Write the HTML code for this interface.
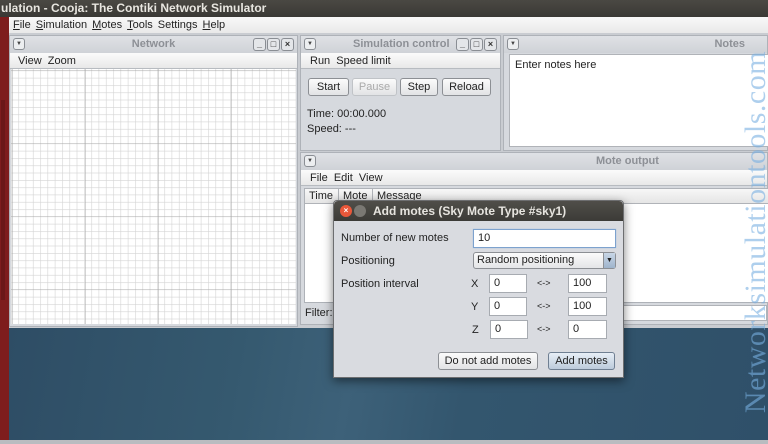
<!DOCTYPE html>
<html><head><meta charset="utf-8"><style>
*{margin:0;padding:0;box-sizing:border-box}
body{width:768px;height:444px;overflow:hidden;position:relative;font-family:"Liberation Sans","DejaVu Sans",sans-serif;font-size:11px;color:#222;background:#345a75}
.abs{position:absolute}
.title{left:0;top:0;width:768px;height:17px;background:linear-gradient(#4a4843,#3a3935);color:#e8e6e0;font-weight:bold;font-size:12px;line-height:17px;padding-left:1px;font-family:"Liberation Sans",sans-serif}
.menu{left:9px;top:17px;width:759px;height:16px;background:linear-gradient(#f8f8f8,#e9e9e9);line-height:16px;padding-left:4px}
.menu span{margin-right:5px}
.work{left:9px;top:33px;width:759px;height:295px;background:#c9ccd1}
.frame{background:#d6d9de;border:1px solid #aeb2b8}
.ftitle{height:17px;background:linear-gradient(#dfe1e5,#cfd2d7);color:#8d9096;font-weight:bold;text-align:center;line-height:17px;font-size:11px;position:relative}
.dd{position:absolute;left:3px;top:2px;width:12px;height:12px;border:1px solid #8a8e94;border-radius:3px;background:#eceef0;font-size:6px;line-height:10px;text-align:center;color:#444;text-indent:0}
.wb{position:absolute;top:2px;width:13px;height:13px;border:1px solid #8a8e94;border-radius:3px;background:#e4e6e9;font-size:9px;line-height:11px;text-align:center;color:#333;text-indent:0}
.mbar{height:16px;background:linear-gradient(#fbfbfb,#e8e8e8);line-height:16px;padding-left:6px;border-bottom:1px solid #b7bbc0}
.btn{position:absolute;height:18px;border:1px solid #8c8f94;border-radius:3px;background:linear-gradient(#fbfbfb,#e2e3e5);text-align:center;line-height:16px;font-size:11px}
.field{position:absolute;height:19px;background:#fff;border:1px solid #a7abb1;line-height:17px;padding-left:4px}
.dlgl{position:absolute;font-size:11px}
</style></head><body>
<div class="abs" style="left:0;top:17px;width:9px;height:423px;background:#7e1d1d"></div>
<div class="abs" style="left:1px;top:100px;width:4px;height:200px;background:#6b1818"></div>
<div class="abs title">ulation - Cooja: The Contiki Network Simulator</div>
<div class="abs menu"><span><u>F</u>ile</span><span><u>S</u>imulation</span><span><u>M</u>otes</span><span><u>T</u>ools</span><span>Settings</span><span><u>H</u>elp</span></div>
<div class="abs work"></div>
<div class="abs" style="left:9px;top:328px;width:759px;height:112px;background:linear-gradient(100deg,#2e4d65 0%,#35596f 30%,#3d6179 45%,#33566e 60%,#2f5069 100%)"></div>
<div class="abs" style="left:0;top:440px;width:768px;height:4px;background:#b9bcc0"></div>

<div class="abs frame" style="left:9px;top:35px;width:289px;height:292px">
 <div class="ftitle">Network<div class="dd">▼</div><div class="wb" style="left:243px">_</div><div class="wb" style="left:257px">□</div><div class="wb" style="left:271px">×</div></div>
 <div class="mbar" style="padding-left:8px">View&nbsp; Zoom</div>
 <svg style="position:absolute;left:1px;top:33px" width="285" height="255">
  <defs>
   <pattern id="mn" x="0" y="1.5" width="7.3" height="7.3" patternUnits="userSpaceOnUse"><path d="M0 0H7.3M0 0V7.3" stroke="#d4d4d4" stroke-width="1.2" fill="none"/></pattern>
   <pattern id="mj" x="1" y="1.5" width="73" height="73" patternUnits="userSpaceOnUse"><path d="M0 0H73M0 0V73" stroke="#a8a8a8" stroke-width="1" fill="none"/></pattern>
  </defs>
  <rect width="285" height="255" fill="#fff"/>
  <rect width="285" height="255" fill="url(#mn)"/>
  <rect width="285" height="255" fill="url(#mj)"/>
 </svg>
</div>

<div class="abs frame" style="left:300px;top:35px;width:201px;height:116px">
 <div class="ftitle"><span style="position:absolute;left:52px">Simulation control</span><div class="dd">▼</div><div class="wb" style="left:155px">_</div><div class="wb" style="left:169px">□</div><div class="wb" style="left:183px">×</div></div>
 <div class="mbar" style="padding-left:9px">Run&nbsp; Speed limit</div>
 <div class="btn" style="left:7px;top:42px;width:41px">Start</div>
 <div class="btn" style="left:51px;top:42px;width:45px;color:#aaa;border-color:#c0c3c7">Pause</div>
 <div class="btn" style="left:99px;top:42px;width:38px">Step</div>
 <div class="btn" style="left:141px;top:42px;width:49px">Reload</div>
 <div class="abs" style="left:6px;top:72px">Time: 00:00.000</div>
 <div class="abs" style="left:6px;top:87px">Speed: ---</div>
</div>

<div class="abs frame" style="left:503px;top:35px;width:265px;height:116px">
 <div class="ftitle" style="text-align:right;padding-right:22px">Notes<div class="dd">▼</div></div>
 <div class="abs" style="left:5px;top:18px;width:262px;height:93px;background:#fff;border:1px solid #b0b3b8;padding:4px 5px">Enter notes here</div>
</div>

<div class="abs frame" style="left:300px;top:152px;width:468px;height:173px">
 <div class="ftitle"><span style="position:absolute;left:295px">Mote output</span><div class="dd">▼</div></div>
 <div class="mbar" style="padding-left:9px">File&nbsp; Edit&nbsp; View</div>
 <div class="abs" style="left:3px;top:35px;width:465px;height:115px;background:#fff;border:1px solid #aeb2b8"></div>
 <div class="abs" style="left:4px;top:36px;width:464px;height:15px;background:linear-gradient(#f7f7f7,#e5e5e5);border-bottom:1px solid #b0b3b8;line-height:14px">
  <span style="position:absolute;left:4px">Time</span><span style="position:absolute;left:33px;border-left:1px solid #b0b3b8;padding-left:4px">Mote</span><span style="position:absolute;left:67px;border-left:1px solid #b0b3b8;padding-left:4px">Message</span></div>
 <div class="abs" style="left:4px;top:154px">Filter:</div>
 <div class="abs" style="left:34px;top:152px;width:432px;height:16px;background:#fff;border:1px solid #b0b3b8"></div>
</div>

<div class="abs" style="left:756px;top:232px;width:0;height:0">
 <div style="position:absolute;transform:translate(-50%,-50%) rotate(-90deg);white-space:nowrap;font-family:'Liberation Serif',serif;font-size:30px;color:rgba(120,175,225,0.6);letter-spacing:0.5px">Networksimulationtools.com</div>
</div>

<div class="abs" style="left:333px;top:200px;width:291px;height:178px;background:#d9dbe0;border:1px solid #6d6e70;box-shadow:0 3px 10px rgba(0,0,0,0.5);border-radius:4px 4px 0 0">
 <div style="height:20px;background:linear-gradient(#504e49,#3c3b37);border-radius:4px 4px 0 0;color:#e6e4df;font-weight:bold;font-size:12px;line-height:20px;padding-left:39px;position:relative;font-family:'Liberation Sans',sans-serif">Add motes (Sky Mote Type #sky1)
  <div style="position:absolute;left:6px;top:4px;width:12px;height:12px;border-radius:50%;background:#e9573a;color:#fff;font-size:8px;line-height:12px;text-align:center">×</div>
  <div style="position:absolute;left:20px;top:4px;width:12px;height:12px;border-radius:50%;background:#7a7873"></div>
 </div>
 <div class="dlgl" style="left:7px;top:31px">Number of new motes</div>
 <div class="field" style="left:139px;top:28px;width:143px;border:1px solid #7da2ce;box-shadow:0 0 1px #9bbbe0">10</div>
 <div class="dlgl" style="left:7px;top:54px">Positioning</div>
 <div class="abs" style="left:139px;top:51px;width:143px;height:17px;border:1px solid #8c8f94;border-radius:3px;background:linear-gradient(#fbfbfb,#e4e5e7);line-height:15px;padding-left:3px">Random positioning<div style="position:absolute;right:0;top:0;width:12px;height:15px;background:linear-gradient(#c8d6e6,#9fb4cc);border-left:1px solid #8c8f94;font-size:7px;text-align:center;line-height:15px">▼</div></div>
 <div class="dlgl" style="left:7px;top:77px">Position interval</div>
 <div class="dlgl" style="left:137px;top:77px">X</div><div class="field" style="left:155px;top:73px;width:38px">0</div><div class="dlgl" style="left:203px;top:77px;font-size:9px">&lt;-&gt;</div><div class="field" style="left:234px;top:73px;width:39px">100</div>
 <div class="dlgl" style="left:137px;top:100px">Y</div><div class="field" style="left:155px;top:96px;width:38px">0</div><div class="dlgl" style="left:203px;top:100px;font-size:9px">&lt;-&gt;</div><div class="field" style="left:234px;top:96px;width:39px">100</div>
 <div class="dlgl" style="left:138px;top:123px">Z</div><div class="field" style="left:156px;top:119px;width:38px">0</div><div class="dlgl" style="left:203px;top:123px;font-size:9px">&lt;-&gt;</div><div class="field" style="left:234px;top:119px;width:39px">0</div>
 <div class="btn" style="left:104px;top:151px;width:100px">Do not add motes</div>
 <div class="btn" style="left:214px;top:151px;width:67px;background:linear-gradient(#e7eef6,#bccbdb);border-color:#6f7f92">Add motes</div>
</div>
</body></html>
